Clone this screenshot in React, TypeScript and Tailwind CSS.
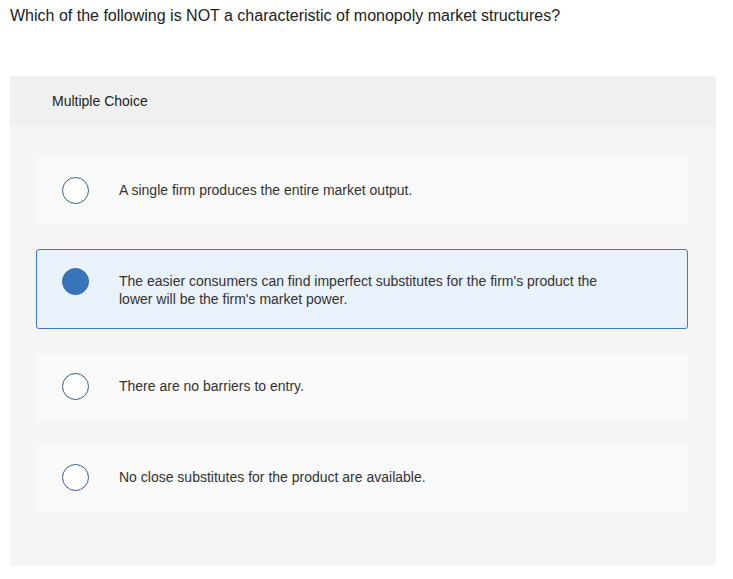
import React from "react";

const options = [
  { text: "A single firm produces the entire market output.", selected: false },
  {
    text: "The easier consumers can find imperfect substitutes for the firm's product the lower will be the firm's market power.",
    selected: true,
  },
  { text: "There are no barriers to entry.", selected: false },
  { text: "No close substitutes for the product are available.", selected: false },
];

export default function App() {
  return (
    <div
      className="w-[733px] h-[579px] bg-white text-[#333]"
      style={{ fontFamily: '"Liberation Sans", Arial, sans-serif' }}
    >
      <div className="pt-[6px] pl-[10px] text-[16px] leading-[20px] text-[#222]">
        Which of the following is NOT a characteristic of monopoly market structures?
      </div>
      <div className="mt-[50px] ml-[10px] w-[706px] h-[490px] rounded-[3px] bg-[#f5f5f5] overflow-hidden">
        <div className="h-[50px] bg-[#f0f0f0] pl-[42px] flex items-center text-[14px] text-[#222]">
          Multiple Choice
        </div>
        <div className="pt-[32px] pl-[26px] pr-[28px] flex flex-col gap-[25px]">
          {options.map((o, i) => (
            <div
              key={i}
              className={
                o.selected
                  ? "min-h-[66px] rounded-[3px] border border-[#3c7bc4] bg-[#e9f1fb] flex items-start pt-[18px] pb-[20px] pl-[25px]"
                  : "min-h-[66px] rounded-[3px] border border-transparent bg-[#fafafa] flex items-start pt-[18px] pb-[18px] pl-[25px]"
              }
            >
              <div
                className={
                  o.selected
                    ? "w-[27px] h-[27px] shrink-0 rounded-full border border-[#2f67a8] bg-[#3774b9]"
                    : "w-[27px] h-[27px] shrink-0 rounded-full border-[1.5px] border-[#2f5f95] bg-white"
                }
              />
              <div className="ml-[30px] w-[490px] pt-[4px] text-[14px] leading-[18px] text-[#333]">{o.text}</div>
            </div>
          ))}
        </div>
      </div>
    </div>
  );
}
